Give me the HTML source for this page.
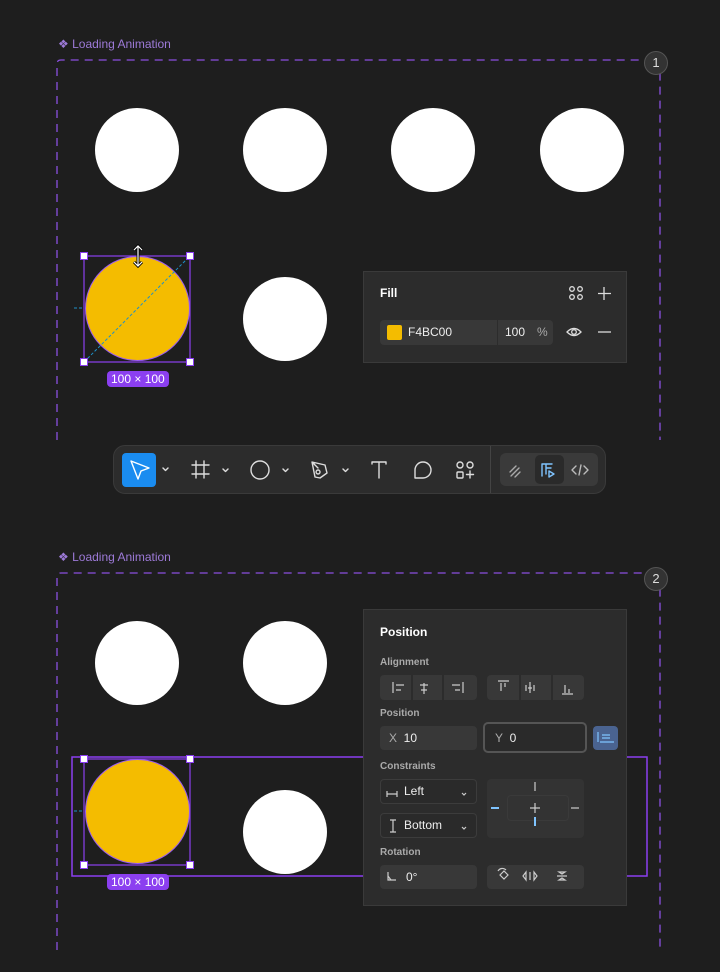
<!DOCTYPE html>
<html><head><meta charset="utf-8"><style>
*{margin:0;padding:0;box-sizing:border-box}
body{width:720px;height:972px;background:#1e1e1e;position:relative;overflow:hidden;font-family:"Liberation Sans",sans-serif;color:#fff}
.a{position:absolute}
.c{position:absolute;border-radius:50%;background:#fff}
.y{position:absolute;border-radius:50%;background:#f4bc00;border:1.5px solid #9b5cf0}
.lbl{position:absolute;color:#9d7ad8;font-size:12px}
.tag{position:absolute;background:#8b3ff0;color:#fff;font-size:12px;padding:1px 4px;border-radius:4px}
.h{position:absolute;width:8px;height:8px;background:#fff;border:1.5px solid #8b3ff0}
.badge{position:absolute;width:24px;height:24px;border-radius:50%;background:#333;border:1px solid #555;color:#ddd;font-size:13px;text-align:center;line-height:22px}
.panel{position:absolute;background:#2c2c2c;border:1px solid #3a3a3a}
.sub{position:absolute;color:#aaa;font-size:10px;font-weight:bold}
.box{position:absolute;background:#383838;border-radius:4px}
.t{font-size:12px;color:#eee}
</style></head><body>

<svg class="a" style="left:0;top:0" width="720" height="972">
<path d="M57 440 V64 Q57 60 61 60 H660 V440" fill="none" stroke="#8b4fe0" stroke-width="1.3" stroke-dasharray="8 6"/>
<path d="M57 950 V577 Q57 573 61 573 H660 V950" fill="none" stroke="#8b4fe0" stroke-width="1.3" stroke-dasharray="8 6"/>
<rect x="72" y="757" width="575" height="119" fill="none" stroke="#8b3ff0" stroke-width="1.5"/>
<line x1="74" y1="308" x2="84" y2="308" stroke="#1e90c8" stroke-dasharray="3 2"/>
<line x1="74" y1="811" x2="84" y2="811" stroke="#1e90c8" stroke-dasharray="3 2"/>
</svg>

<div class="lbl" style="left:58px;top:37px">❖ Loading Animation</div>
<div class="lbl" style="left:58px;top:550px">❖ Loading Animation</div>
<div class="badge" style="left:644px;top:51px">1</div>
<div class="badge" style="left:644px;top:567px">2</div>

<div class="c" style="left:95px;top:108px;width:84px;height:84px"></div>
<div class="c" style="left:243px;top:108px;width:84px;height:84px"></div>
<div class="c" style="left:391px;top:108px;width:84px;height:84px"></div>
<div class="c" style="left:540px;top:108px;width:84px;height:84px"></div>
<div class="c" style="left:243px;top:277px;width:84px;height:84px"></div>
<div class="c" style="left:95px;top:621px;width:84px;height:84px"></div>
<div class="c" style="left:243px;top:621px;width:84px;height:84px"></div>
<div class="c" style="left:243px;top:790px;width:84px;height:84px"></div>

<svg class="a" style="left:0;top:0" width="720" height="972">
<rect x="84" y="256" width="106" height="106" fill="none" stroke="#8b3ff0" stroke-width="1.2"/>
<rect x="84" y="759" width="106" height="106" fill="none" stroke="#8b3ff0" stroke-width="1.2"/>
</svg>
<div class="y" style="left:85px;top:256px;width:105px;height:105px"></div>
<div class="y" style="left:85px;top:759px;width:105px;height:105px"></div>
<svg class="a" style="left:0;top:0" width="720" height="972">
<line x1="84" y1="362" x2="190" y2="256" stroke="#1e90c8" stroke-dasharray="3 2"/>
<path d="M138 246 v20 M134 250 l4-4 4 4 M134 262 l4 4 4-4" stroke="#000" stroke-width="3" fill="none"/>
<path d="M138 246 v20 M134 250 l4-4 4 4 M134 262 l4 4 4-4" stroke="#fff" stroke-width="1.2" fill="none"/>
</svg>
<div class="h" style="left:80px;top:252px"></div><div class="h" style="left:186px;top:252px"></div>
<div class="h" style="left:80px;top:358px"></div><div class="h" style="left:186px;top:358px"></div>
<div class="h" style="left:80px;top:755px"></div><div class="h" style="left:186px;top:755px"></div>
<div class="h" style="left:80px;top:861px"></div><div class="h" style="left:186px;top:861px"></div>
<div class="tag" style="left:107px;top:371px">100 × 100</div>
<div class="tag" style="left:107px;top:874px">100 × 100</div>

<!-- Fill panel -->
<div class="panel" style="left:363px;top:271px;width:264px;height:92px">
<div class="a" style="left:16px;top:14px;font-size:12px;font-weight:bold">Fill</div>
<svg class="a" style="left:204px;top:14px" width="50" height="16" fill="none" stroke="#ddd" stroke-width="1.3">
<circle cx="4" cy="3" r="2.3"/><circle cx="12" cy="3" r="2.3"/><circle cx="4" cy="11" r="2.3"/><circle cx="12" cy="11" r="2.3"/>
<path d="M36 1v13M30 7.5h13"/></svg>
<div class="box" style="left:16px;top:48px;width:173px;height:25px"></div>
<div class="a" style="left:133px;top:48px;width:1px;height:25px;background:#2c2c2c"></div>
<div class="a" style="left:23px;top:53px;width:15px;height:15px;background:#f4bc00;border-radius:2px"></div>
<div class="a t" style="left:44px;top:53px">F4BC00</div>
<div class="a t" style="left:141px;top:53px">100</div>
<div class="a t" style="left:173px;top:53px;color:#aaa">%</div>
<svg class="a" style="left:202px;top:52px" width="50" height="16" fill="none" stroke="#ddd" stroke-width="1.3">
<path d="M1 8 Q8 1 15 8 Q8 15 1 8Z"/><circle cx="8" cy="8" r="2.3"/><path d="M32 8h13"/></svg>
</div>

<!-- Toolbar -->
<div class="a" style="left:113px;top:445px;width:493px;height:49px;background:#2c2c2c;border-radius:12px;border:1px solid #3a3a3a"></div>
<div class="a" style="left:122px;top:453px;width:34px;height:34px;background:#1a8cf0;border-radius:4px"></div>
<div class="a" style="left:490px;top:446px;width:1px;height:47px;background:#444"></div>
<div class="a" style="left:500px;top:453px;width:98px;height:33px;background:#3a3a3a;border-radius:6px"></div>
<div class="a" style="left:535px;top:455px;width:29px;height:29px;background:#2a2a2a;border-radius:5px"></div>
<svg class="a" style="left:110px;top:440px" width="500" height="60" fill="none" stroke="#ddd" stroke-width="1.4" stroke-linecap="round" stroke-linejoin="round">
<path d="M21 21 L39 28 L31 31 L28 39 Z" stroke="#fff"/>
<path d="M53 28l2.5 2.5 2.5-2.5M113 29l2.5 2.5 2.5-2.5M173 29l2.5 2.5 2.5-2.5M233 29l2.5 2.5 2.5-2.5"/>
<path d="M86 21v17M94 21v17M82 25h17M82 34h17"/>
<circle cx="150" cy="30" r="9"/>
<path d="M202 22 L215 25 L217 33 L210 38 L205 37 Z M208 30 a2 2 0 1 0 0.1 0 M203 23l5 5"/>
<path d="M262 22h14M269 22v16M262 22v2M276 22v2"/>
<path d="M305 38 V30 a8 8 0 1 1 8 8 Z"/>
<circle cx="350" cy="25" r="3"/><circle cx="360" cy="25" r="3"/><rect x="347" y="32" width="6" height="6" rx="1"/><path d="M360 31v7M356.5 34.5h7"/>
<path d="M400 32l6-6M401 36l8-8M405 37l5-5" stroke="#aaa"/>
<path d="M432 24h10M432 24v12M436 24v10M436 28h5" stroke="#7fc4ff"/><path d="M439 31l5 3-5 3z" stroke="#7fc4ff"/>
<path d="M466 26l-4 4 4 4M474 26l4 4-4 4M471 25l-2 10" stroke="#bbb"/>
</svg>

<!-- Position panel -->
<div class="panel" style="left:363px;top:609px;width:264px;height:297px">
<div class="a" style="left:16px;top:15px;font-size:12px;font-weight:bold">Position</div>
<div class="sub" style="left:16px;top:47px">Alignment</div>
<div class="box" style="left:16px;top:65px;width:97px;height:25px"></div>
<div class="box" style="left:123px;top:65px;width:97px;height:25px"></div>
<div class="sub" style="left:16px;top:98px">Position</div>
<div class="box" style="left:16px;top:116px;width:97px;height:24px"></div>
<div class="a t" style="left:25px;top:121px"><span style="color:#aaa">X</span>&nbsp; 10</div>
<div class="a" style="left:119px;top:112px;width:104px;height:31px;border:2px solid #555;border-radius:5px;background:#2a2a2a"></div>
<div class="a t" style="left:131px;top:121px"><span style="color:#aaa">Y</span>&nbsp; 0</div>
<div class="a" style="left:229px;top:116px;width:25px;height:24px;background:#4a6390;border-radius:4px"></div>
<div class="sub" style="left:16px;top:151px">Constraints</div>
<div class="a" style="left:16px;top:169px;width:97px;height:25px;border:1px solid #3c3c3c;border-radius:4px;background:#2a2a2a"></div>
<div class="a t" style="left:40px;top:174px">Left</div>
<div class="a" style="left:16px;top:203px;width:97px;height:25px;border:1px solid #3c3c3c;border-radius:4px;background:#2a2a2a"></div>
<div class="a t" style="left:40px;top:208px">Bottom</div>
<div class="box" style="left:123px;top:169px;width:97px;height:59px;background:#333"></div>
<div class="a" style="left:143px;top:185px;width:62px;height:26px;border:1px solid #3a3a3a;border-radius:4px"></div>
<div class="sub" style="left:16px;top:237px">Rotation</div>
<div class="box" style="left:16px;top:255px;width:97px;height:24px"></div>
<div class="a t" style="left:42px;top:260px">0°</div>
<div class="box" style="left:123px;top:255px;width:97px;height:24px"></div>
<svg class="a" style="left:0;top:0" width="264" height="297" fill="none" stroke="#ccc" stroke-width="1.2">
<path d="M48 65v25M79 65v25M156 65v25M188 65v25" stroke="#2c2c2c" stroke-width="2"/>
<path d="M29 72v11M32 75h8M32 80h5 M60 73v11M56 75h8M57 80h6 M99 72v11M88 75h8M91 80h5 M134 71h11M137 73v8M141 73v4 M166 72v11M162 75v6M170 75v6M164 78h4 M198 84h11M201 75v8M205 79v4"/>
<path d="M234 122v10M236 132h14M238 125h8M238 128h8" stroke="#7fc4ff"/>
<path d="M23 181v6M23 184h10M33 181v6 M26 210h6M29 210v12M26 222h6 M98 183l2 2 2-2M98 217l2 2 2-2"/>
<path d="M171 172v9M166 198h10M171 193v10" /><path d="M127 198h8M171 207v9" stroke="#7fc4ff" stroke-width="2"/><path d="M207 198h8"/>
<path d="M24 262v8h8M24 266l3 4"/>
<path d="M134 261a5 5 0 0 1 8-1M136 265l4-4 4 4-4 4z M166 262v8M162 262l-3 4 3 4zM170 262l3 4-3 4z M193 266h10M195 262h6l-3 2zM195 270h6l-3-2z"/>
</svg>
</div>
</body></html>
